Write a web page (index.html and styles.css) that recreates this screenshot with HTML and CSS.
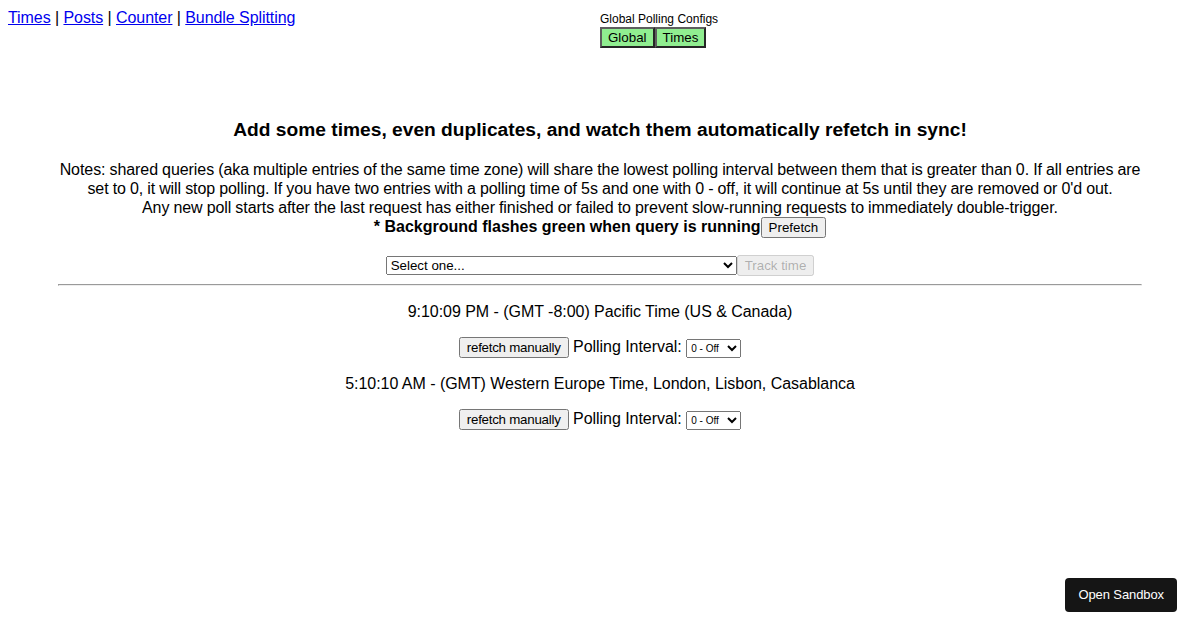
FILE: index.html
```html
<!DOCTYPE html>
<html>
<head>
<meta charset="utf-8">
<link rel="stylesheet" href="styles.css">
</head>
<body>
<div class="top">
  <nav class="nav">
    <a href="#">Times</a> | <a href="#">Posts</a> | <a href="#">Counter</a> | <a href="#">Bundle Splitting</a>
  </nav>
  <div class="configs">
    <div><span class="configs-label">Global Polling Configs</span></div>
    <div class="config-btns"><button class="green">Global</button><button class="green">Times</button></div>
  </div>
</div>
<main class="app">
  <h3 class="title">Add some times, even duplicates, and watch them automatically refetch in sync!</h3>
  <p class="notes">Notes: shared queries (aka multiple entries of the same time zone) will share the lowest polling interval between them that is greater than 0. If all entries are set to 0, it will stop polling. If you have two entries with a polling time of 5s and one with 0 - off, it will continue at 5s until they are removed or 0'd out.<br>Any new poll starts after the last request has either finished or failed to prevent slow-running requests to immediately double-trigger.<br><strong class="flash">* Background flashes green when query is running</strong><button class="ctl">Prefetch</button></p>
  <form class="add">
    <select class="tz"><option>Select one...</option></select><button class="ctl" disabled>Track time</button>
  </form>
  <hr class="rule">
  <div class="entry">
    <p>9:10:09 PM - (GMT -8:00) Pacific Time (US &amp; Canada)</p>
    <p><button class="ctl refetch">refetch manually</button> Polling Interval: <select class="poll"><option>0 - Off</option></select></p>
  </div>
  <div class="entry">
    <p>5:10:10 AM - (GMT) Western Europe Time, London, Lisbon, Casablanca</p>
    <p><button class="ctl refetch">refetch manually</button> Polling Interval: <select class="poll"><option>0 - Off</option></select></p>
  </div>
</main>
<a class="sandbox" href="#">Open Sandbox</a>
</body>
</html>
```
FILE: styles.css
```css
body {
  margin: 8px;
  font-family: "Liberation Sans", Arial, sans-serif;
  font-size: 16px;
  line-height: 19px;
  letter-spacing: -0.07px;
  color: #000;
  background: #fff;
}
.top {
  display: flex;
  align-items: flex-start;
}
.nav {
  flex: 1;
}
.nav a {
  color: #0000ee;
}
.configs {
  flex: 1;
}
.configs-label {
  font-size: 12px;
  line-height: 14px;
  letter-spacing: 0;
}
.config-btns {
  display: flex;
}
button, select {
  font-family: "Liberation Sans", Arial, sans-serif;
  font-size: 13.33px;
  line-height: 15px;
  letter-spacing: 0;
  word-spacing: 0;
}
.green {
  background: #90ee90;
  border: 2px solid;
  border-color: #5e5e5e #262626 #262626 #5e5e5e;
  padding: 1px 6px;
  color: #000;
}
.app {
  padding: 52px 50px 0;
  text-align: center;
}
.title {
  font-size: 19.2px;
  line-height: 22px;
  letter-spacing: 0;
  margin: 19.2px 0 19px;
}
.notes {
  margin: 16px 0;
  word-spacing: -0.3px;
}
.flash {
  letter-spacing: 0;
  word-spacing: 0;
}
.add {
  margin: 17px 0 0;
}
.tz {
  width: 351px;
  height: 19px;
}
.rule {
  margin: 8px 0 16px;
}
.entry p {
  margin: 16px 0;
  letter-spacing: -0.035px;
}
.refetch {
  letter-spacing: -0.25px;
}
.poll {
  font-size: 10px;
  width: 55px;
  height: 19px;
  letter-spacing: 0;
}
.sandbox {
  position: fixed;
  right: 23px;
  bottom: 18px;
  background: #151515;
  color: #fff;
  font-size: 13px;
  letter-spacing: -0.1px;
  text-decoration: none;
  padding: 10px 13px;
  border-radius: 4px;
  line-height: 14px;
}
```
